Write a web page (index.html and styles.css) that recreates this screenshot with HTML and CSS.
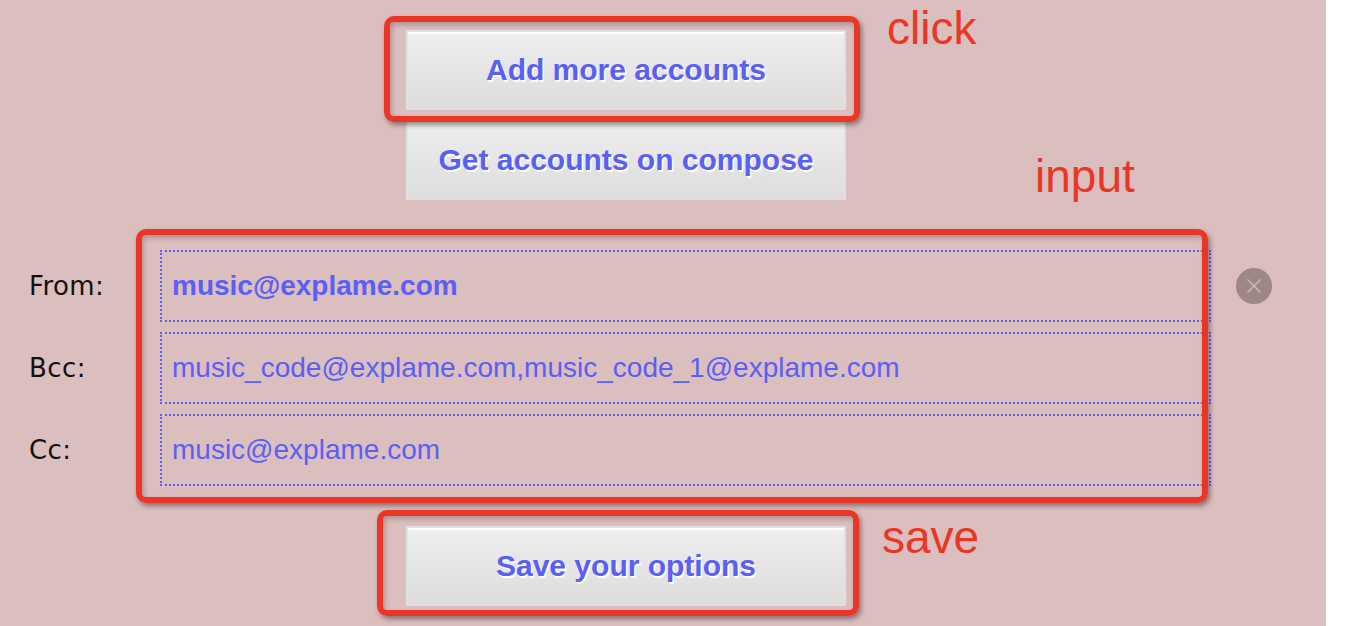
FILE: index.html
```html
<!DOCTYPE html>
<html lang="en">
<head>
  <meta charset="UTF-8">
  <title>Account options</title>
  <link rel="stylesheet" href="styles.css">
</head>
<body>
  <div class="panel">
    <div class="actions">
      <button class="opt-btn">Add more accounts</button>
      <button class="opt-btn plain">Get accounts on compose</button>
    </div>

    <div class="fields">
      <div class="row">
        <label class="row-label">From:</label>
        <div class="field strong">music@explame.com</div>
        <span class="clear">
          <svg width="16" height="16" viewBox="0 0 16 16"><path d="M1.5 1.5L14.500 14.500M14.500 1.500L1.500 14.500" stroke="#d3b6b6" stroke-width="1.500" fill="none"/></svg>
        </span>
      </div>
      <div class="row">
        <label class="row-label">Bcc:</label>
        <div class="field">music_code@explame.com,music_code_1@explame.com</div>
      </div>
      <div class="row">
        <label class="row-label">Cc:</label>
        <div class="field">music@explame.com</div>
      </div>
    </div>

    <div class="actions save">
      <button class="opt-btn">Save your options</button>
    </div>

    <!-- annotations drawn over the screenshot -->
    <div class="mark mark-click"></div>
    <div class="mark mark-input"></div>
    <div class="mark mark-save"></div>
    <div class="note note-click">click</div>
    <div class="note note-input">input</div>
    <div class="note note-save">save</div>
  </div>
</body>
</html>
```

FILE: styles.css
```css
html, body {
  margin: 0;
  height: 626px;
  overflow: hidden;
  background: #fff;
}
.panel {
  position: relative;
  width: 1326px;
  height: 626px;
  padding-top: 30px;
  box-sizing: border-box;
  background: #dbbebe;
  font-family: "Liberation Sans", Arial, sans-serif;
}
.actions {
  display: flex;
  flex-direction: column;
  align-items: center;
  gap: 10px;
  width: 1252px;
}
.save {
  margin-top: 40px;
}
.opt-btn {
  width: 440px;
  height: 80px;
  padding: 0;
  border: 2px solid #e0e0e0;
  box-shadow: inset 0 2px 0 #fff;
  background: linear-gradient(#eeeeee, #dddddd);
  color: #5a5ff5;
  font-family: "Liberation Sans", Arial, sans-serif;
  font-size: 30px;
  font-weight: bold;
  text-shadow: 1.5px 1.5px 0 #fff;
}
.opt-btn.plain {
  border-color: #e0e0e0;
  box-shadow: none;
}
.fields {
  display: flex;
  flex-direction: column;
  gap: 10px;
  margin-top: 50px;
}
.row {
  display: flex;
  align-items: center;
  height: 72px;
}
.row-label {
  width: 131px;
  padding-left: 29px;
  font-family: "DejaVu Sans", Verdana, sans-serif;
  font-size: 26px;
  letter-spacing: 0.4px;
  color: #111;
}
.field {
  display: flex;
  align-items: center;
  width: 1051px;
  height: 72px;
  padding-left: 10px;
  box-sizing: border-box;
  border: 2px dotted #5a5ff5;
  color: #5a5ff5;
  font-size: 28px;
}
.strong {
  font-weight: bold;
}
.clear {
  display: flex;
  align-items: center;
  justify-content: center;
  width: 36px;
  height: 36px;
  margin-left: 25px;
  border-radius: 50%;
  background: #9d8788;
}
.mark {
  position: absolute;
  box-sizing: border-box;
  border: 6px solid #ec3625;
  border-radius: 10px;
  box-shadow: 2px 3px 5px rgba(70, 50, 50, 0.55), inset 2px 3px 5px rgba(70, 50, 50, 0.3);
}
.mark-click {
  left: 384px;
  top: 16px;
  width: 476px;
  height: 106px;
}
.mark-input {
  left: 136px;
  top: 229px;
  width: 1072px;
  height: 274px;
}
.mark-save {
  left: 377px;
  top: 510px;
  width: 482px;
  height: 106px;
}
.note {
  position: absolute;
  color: #ec3625;
  font-size: 46px;
  line-height: 52px;
}
.note-click {
  left: 887px;
  top: 2px;
}
.note-input {
  left: 1035px;
  top: 150px;
}
.note-save {
  left: 882px;
  top: 511px;
}
```
